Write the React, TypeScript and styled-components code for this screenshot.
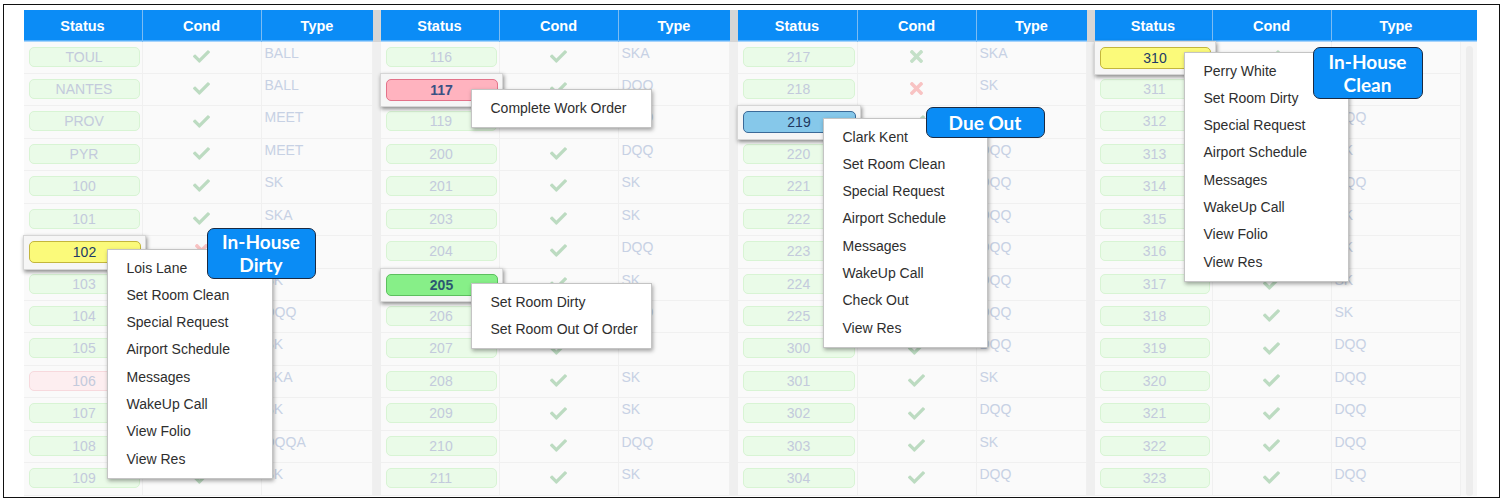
import React from 'react'
import styled, { createGlobalStyle, css } from 'styled-components'
import { FaCheck, FaTimes } from 'react-icons/fa'

const ROW_H = 32.45

type Tone = 'paleGreen' | 'palePink' | 'yellow' | 'pink' | 'green' | 'blue'
type Cond = 'ok' | 'bad' | 'xok'

type Room = {
  s: string
  c: Cond
  t: string
  tone?: Tone
  lifted?: boolean
  bold?: boolean
}

type Table = {
  width: number
  cols: number[]
  scroll?: boolean
  rooms: Room[]
}

const TONES: Record<Tone, ReturnType<typeof css>> = {
  paleGreen: css`background: #eafbe8; border-color: #d8f4d4; color: #c3cadc;`,
  palePink: css`background: #fdeef0; border-color: #f7d9dd; color: #c3cadc;`,
  yellow: css`background: #fbfa7a; border-color: #c3b63c; color: #213a66;`,
  pink: css`background: #ffb3bf; border-color: #e3738a; color: #3a5183;`,
  green: css`background: #87ef88; border-color: #5cbf5e; color: #2d5872;`,
  blue: css`background: #86c8ea; border-color: #3b6a98; color: #1f3860;`
}

const GlobalStyle = createGlobalStyle`
  html, body {
    margin: 0;
    padding: 0;
    background: #fff;
  }
  body {
    font-family: 'Liberation Sans', Arial, sans-serif;
  }
`

const Frame = styled.div`
  box-sizing: border-box;
  margin: 4px 0 0 3px;
  width: 1497px;
  height: 494px;
  border: 1.5px solid #111;
  padding: 4.5px 0 0 19.5px;
  overflow: hidden;
`

const Board = styled.div`
  position: relative;
  display: flex;
  align-items: flex-start;
`

const Panel = styled.section<{ $width: number }>`
  flex: 0 0 ${p => p.$width}px;
`

const Gutter = styled.div`
  flex: 0 0 8px;
  align-self: stretch;
  background: linear-gradient(#d6d6d6 0 32px, #efefef 32px);
`

const HeaderRow = styled.div<{ $cols: string }>`
  display: grid;
  grid-template-columns: ${p => p.$cols};
  height: 32px;
  background: #0b8cf6;
  box-shadow: inset 0 -1.5px 0 #a6d3fb;
`

const HeaderCell = styled.div<{ $trail?: number }>`
  display: flex;
  align-items: center;
  justify-content: center;
  padding-right: ${p => p.$trail ?? 0}px;
  color: #fff;
  font-weight: 700;
  font-size: 14.5px;
  border-right: 1px solid #7cbcf3;
  &:last-child {
    border-right: none;
  }
`

const BodyWrap = styled.div`
  display: flex;
`

const Rows = styled.div`
  flex: 1;
`

const Row = styled.div<{ $cols: string }>`
  display: grid;
  grid-template-columns: ${p => p.$cols};
  height: ${ROW_H}px;
`

const Cell = styled.div`
  box-sizing: border-box;
  background: #fafafa;
  border-right: 1px solid #f0f0f0;
  border-bottom: 1px solid #f0f0f0;
`

const StatusCell = styled(Cell)<{ $lifted?: boolean }>`
  padding: 5px 2px 0 5px;
  ${p => p.$lifted && css`
    position: relative;
    z-index: 1;
    margin: -1px -3px -1px -1px;
    padding: 5px 4px 0 5px;
    background: #f6f6f6;
    border: 1px solid #d6d6d6;
    box-shadow: 1px 2px 4px rgba(0, 0, 0, 0.45);
  `}
`

const Badge = styled.div<{ $tone: Tone; $bold?: boolean; $lifted?: boolean }>`
  box-sizing: border-box;
  height: ${p => (p.$lifted ? 22 : 20)}px;
  border: 1px solid;
  border-radius: 5px;
  display: flex;
  align-items: center;
  justify-content: center;
  font-size: 14px;
  font-weight: ${p => (p.$bold ? 700 : 400)};
  ${p => TONES[p.$tone]}
`

const CondCell = styled(Cell)<{ $cond: Cond }>`
  display: flex;
  align-items: center;
  justify-content: center;
  padding-bottom: 2px;
  color: ${p => (p.$cond === 'bad' ? '#f8c3c3' : p.$cond === 'xok' ? '#c4e0c8' : '#bcdbc1')};
`

const TypeCell = styled(Cell)`
  padding: 3px 0 0 3px;
  font-size: 14px;
  line-height: 16px;
  color: #c7d1e4;
`

const ScrollTrack = styled.div`
  flex: 0 0 16px;
  box-sizing: border-box;
  padding: 4px 4px 0 5px;
  background: #f7f7f7;
`

const ScrollThumb = styled.div`
  height: 100%;
  border-radius: 4px;
  background: #ededed;
`

const Menu = styled.ul<{ $x: number; $y: number; $w: number }>`
  position: absolute;
  left: ${p => p.$x}px;
  top: ${p => p.$y}px;
  width: ${p => p.$w}px;
  z-index: 2;
  box-sizing: border-box;
  margin: 0;
  padding: 5px 0;
  list-style: none;
  background: #fff;
  border: 1px solid #c4c4c4;
  box-shadow: 1px 2px 4px rgba(0, 0, 0, 0.35);
`

const MenuItem = styled.li`
  padding-left: 19px;
  line-height: 27.3px;
  font-size: 14px;
  color: #2e2e2e;
  white-space: nowrap;
`

const Callout = styled.div<{ $x: number; $y: number; $w: number; $h: number }>`
  position: absolute;
  left: ${p => p.$x}px;
  top: ${p => p.$y}px;
  width: ${p => p.$w}px;
  height: ${p => p.$h}px;
  z-index: 3;
  box-sizing: border-box;
  display: flex;
  align-items: center;
  justify-content: center;
  text-align: center;
  background: #0a8cf5;
  border: 1.5px solid #1b2a42;
  border-radius: 7px;
  color: #fff;
  font-family: Lato, 'Liberation Sans', sans-serif;
  font-weight: 700;
  font-size: 19px;
  line-height: 23px;
`

const r = (s: string, t: string, c: Cond = 'ok', extra: Partial<Room> = {}): Room => ({ s, c, t, ...extra })

const TABLES: Table[] = [
  {
    width: 349,
    cols: [119, 119, 111],
    rooms: [
      r('TOUL', 'BALL'), r('NANTES', 'BALL'), r('PROV', 'MEET'), r('PYR', 'MEET'),
      r('100', 'SK'), r('101', 'SKA'),
      r('102', 'DQQ', 'bad', { tone: 'yellow', lifted: true }),
      r('103', 'SK'), r('104', 'DQQ'), r('105', 'SK'),
      r('106', 'SKA', 'ok', { tone: 'palePink' }),
      r('107', 'SK'), r('108', 'DQQA'), r('109', 'SK')
    ]
  },
  {
    width: 349,
    cols: [119, 119, 111],
    rooms: [
      r('116', 'SKA'),
      r('117', 'DQQ', 'ok', { tone: 'pink', lifted: true, bold: true }),
      r('119', 'DQQ'), r('200', 'DQQ'), r('201', 'SK'), r('203', 'SK'), r('204', 'DQQ'),
      r('205', 'SK', 'ok', { tone: 'green', lifted: true, bold: true }),
      r('206', 'DQQ'), r('207', 'SK'), r('208', 'SK'), r('209', 'SK'), r('210', 'DQQ'), r('211', 'SK')
    ]
  },
  {
    width: 349,
    cols: [120, 119, 110],
    rooms: [
      r('217', 'SKA', 'xok'), r('218', 'SK', 'bad'),
      r('219', 'DQQ', 'ok', { tone: 'blue', lifted: true }),
      r('220', 'DQQ'), r('221', 'DQQ'), r('222', 'DQQ'), r('223', 'DQQ'), r('224', 'DQQ'), r('225', 'DQQ'),
      r('300', 'DQQ'), r('301', 'SK'), r('302', 'DQQ'), r('303', 'SK'), r('304', 'DQQ')
    ]
  },
  {
    width: 382,
    cols: [118, 119, 129],
    scroll: true,
    rooms: [
      r('310', 'SK', 'ok', { tone: 'yellow', lifted: true }),
      r('311', 'DQQ'), r('312', 'DQQ'), r('313', 'SK'), r('314', 'DQQ'), r('315', 'SK'), r('316', 'SK'),
      r('317', 'SK'), r('318', 'SK'), r('319', 'DQQ'), r('320', 'DQQ'), r('321', 'DQQ'), r('322', 'DQQ'), r('323', 'DQQ')
    ]
  }
]

const GUEST_MENU = ['Special Request', 'Airport Schedule', 'Messages', 'WakeUp Call']

const MENUS = [
  { x: 83, y: 239, w: 166, items: ['Lois Lane', 'Set Room Clean', ...GUEST_MENU, 'View Folio', 'View Res'] },
  { x: 447, y: 79, w: 181, items: ['Complete Work Order'] },
  { x: 447, y: 273, w: 181, items: ['Set Room Dirty', 'Set Room Out Of Order'] },
  { x: 799, y: 108, w: 165, items: ['Clark Kent', 'Set Room Clean', ...GUEST_MENU, 'Check Out', 'View Res'] },
  { x: 1160, y: 42, w: 165, items: ['Perry White', 'Set Room Dirty', ...GUEST_MENU, 'View Folio', 'View Res'] }
]

const CALLOUTS = [
  { x: 183, y: 218, w: 109, h: 51, lines: ['In-House', 'Dirty'] },
  { x: 902, y: 97, w: 119, h: 31, lines: ['Due Out'] },
  { x: 1289, y: 37, w: 110, h: 52, lines: ['In-House', 'Clean'] }
]

function RoomTable ({ table }: { table: Table }) {
  const cols = table.cols.map(c => `${c}px`).join(' ')
  const headCols = table.scroll ? `${table.cols[0]}px ${table.cols[1]}px 1fr` : cols
  return (
    <Panel $width={table.width}>
      <HeaderRow $cols={headCols}>
        <HeaderCell>Status</HeaderCell>
        <HeaderCell>Cond</HeaderCell>
        <HeaderCell $trail={table.scroll ? 16 : 0}>Type</HeaderCell>
      </HeaderRow>
      <BodyWrap>
        <Rows>
          {table.rooms.map(room => (
            <Row key={room.s} $cols={cols}>
              <StatusCell $lifted={room.lifted}>
                <Badge $tone={room.tone ?? 'paleGreen'} $bold={room.bold} $lifted={room.lifted}>{room.s}</Badge>
              </StatusCell>
              <CondCell $cond={room.c}>
                {room.c === 'ok' ? <FaCheck size={17} /> : <FaTimes size={19} />}
              </CondCell>
              <TypeCell>{room.t}</TypeCell>
            </Row>
          ))}
        </Rows>
        {table.scroll && <ScrollTrack><ScrollThumb /></ScrollTrack>}
      </BodyWrap>
    </Panel>
  )
}

export default function App () {
  return (
    <>
      <GlobalStyle />
      <Frame>
        <Board>
          {TABLES.map((table, i) => (
            <React.Fragment key={i}>
              {i > 0 && <Gutter />}
              <RoomTable table={table} />
            </React.Fragment>
          ))}
          {MENUS.map((menu, i) => (
            <Menu key={i} $x={menu.x} $y={menu.y} $w={menu.w}>
              {menu.items.map(item => <MenuItem key={item}>{item}</MenuItem>)}
            </Menu>
          ))}
          {CALLOUTS.map((c, i) => (
            <Callout key={i} $x={c.x} $y={c.y} $w={c.w} $h={c.h}>
              <div>{c.lines.map(line => <div key={line}>{line}</div>)}</div>
            </Callout>
          ))}
        </Board>
      </Frame>
    </>
  )
}
